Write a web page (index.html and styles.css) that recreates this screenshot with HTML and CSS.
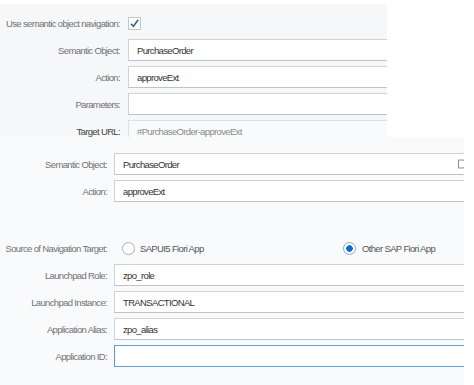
FILE: index.html
```html
<!DOCTYPE html>
<html lang="en">

<head>
    <meta charset="UTF-8">
    <meta name="viewport" content="width=device-width, initial-scale=1.0">
    <title>Semantic Object Navigation</title>
    <link rel="stylesheet" href="styles.css">
</head>

<body>
    <!-- first capture: tile target settings -->
    <div class="panel panel-tile">
        <div class="row">
            <label class="label">Use semantic object navigation:</label>
            <span class="checkbox">
                <svg width="11" height="11" viewBox="0 0 11 11">
                    <path d="M2 5.8 L4.4 8.3 L9.2 1.8" fill="none" stroke="#2f6496" stroke-width="1.6" />
                </svg>
            </span>
        </div>
        <div class="row">
            <label class="label">Semantic Object:</label>
            <div class="field">PurchaseOrder</div>
        </div>
        <div class="row">
            <label class="label">Action:</label>
            <div class="field">approveExt</div>
        </div>
        <div class="row">
            <label class="label">Parameters:</label>
            <div class="field"></div>
        </div>
        <div class="row">
            <label class="label label-dark">Target URL:</label>
            <div class="field field-readonly">#PurchaseOrder-approveExt</div>
        </div>
    </div>

    <!-- second capture: navigation target -->
    <div class="panel panel-target">
        <div class="row">
            <label class="label">Semantic Object:</label>
            <div class="field">
                <span>PurchaseOrder</span>
                <svg class="help-icon" width="9" height="10" viewBox="0 0 9 10">
                    <path d="M0.5 1 H5 Q8.5 1 8.5 5 Q8.5 9 5 9 H0.5 Z" fill="none" stroke="#8a8a8a" stroke-width="1" />
                </svg>
            </div>
        </div>
        <div class="row">
            <label class="label">Action:</label>
            <div class="field">approveExt</div>
        </div>

        <div class="row row-source">
            <label class="label">Source of Navigation Target:</label>
            <div class="radio-group">
                <span class="radio-item"><span class="radio"></span>SAPUI5 Fiori App</span>
                <span class="radio-item"><span class="radio radio-on"></span>Other SAP Fiori App</span>
            </div>
        </div>

        <div class="row">
            <label class="label">Launchpad Role:</label>
            <div class="field">zpo_role</div>
        </div>
        <div class="row">
            <label class="label">Launchpad Instance:</label>
            <div class="field">TRANSACTIONAL</div>
        </div>
        <div class="row">
            <label class="label">Application Alias:</label>
            <div class="field">zpo_alias</div>
        </div>
        <div class="row">
            <label class="label">Application ID:</label>
            <div class="field field-focus"></div>
        </div>
    </div>
</body>

</html>
```

FILE: styles.css
```css
body {
    font-family: 'Liberation Sans', Arial, sans-serif;
    font-size: 9.5px;
    letter-spacing: -0.65px;
    color: #333;
    background-color: #fff;
    margin: 0;
    padding: 0;
}

.panel {
    overflow: hidden;
    box-sizing: border-box;
}

.panel-tile {
    width: 387px;
    height: 133px;
    margin-top: 4px;
    padding-top: 8px;
    background-color: #f5f7f9;
}

.panel-target {
    width: 464px;
    height: 248px;
    padding-top: 16px;
    background-color: #f8fafc;
}

.row {
    display: flex;
    align-items: center;
    height: 22px;
    margin-bottom: 5px;
}

.label {
    flex: none;
    box-sizing: border-box;
    text-align: right;
    color: #727272;
    white-space: nowrap;
}

.panel-tile .label {
    width: 128px;
    padding-right: 8px;
}

.panel-target .label {
    width: 114px;
    padding-right: 7px;
}

.label-dark {
    color: #444;
}

.field {
    flex: none;
    display: flex;
    align-items: center;
    justify-content: space-between;
    box-sizing: border-box;
    width: 360px;
    height: 22px;
    padding: 0 6px 0 8px;
    background-color: #fff;
    border: 1px solid #cfd3d6;
    border-bottom-color: #bfc3c6;
    color: #333;
}

.panel-tile .field {
    width: 300px;
}

.field-readonly {
    background-color: #f9fafb;
    border-color: #dde1e4;
    color: #8a8a8a;
}

.field-focus {
    border-color: #5c9fd4;
}

.help-icon {
    flex: none;
}

.checkbox {
    display: flex;
    align-items: center;
    justify-content: center;
    box-sizing: border-box;
    width: 13px;
    height: 13px;
    background-color: #fff;
    border: 1px solid #c2c6ca;
}

.row-source {
    margin-top: 35px;
    margin-bottom: 5px;
}

.radio-group {
    display: grid;
    grid-template-columns: 221px 221px;
}

.radio-item {
    display: flex;
    align-items: center;
    gap: 5px;
    padding-left: 8px;
    color: #555;
}

.radio-item+.radio-item {
    gap: 6px;
}

.radio {
    flex: none;
    box-sizing: border-box;
    width: 13px;
    height: 13px;
    border: 1px solid #a9adb1;
    border-radius: 50%;
    background-color: #fff;
}

.radio-on {
    background: radial-gradient(circle, #0a6ed1 0, #0a6ed1 3px, #fff 3.5px);
    border-color: #8fa9c4;
}
```
